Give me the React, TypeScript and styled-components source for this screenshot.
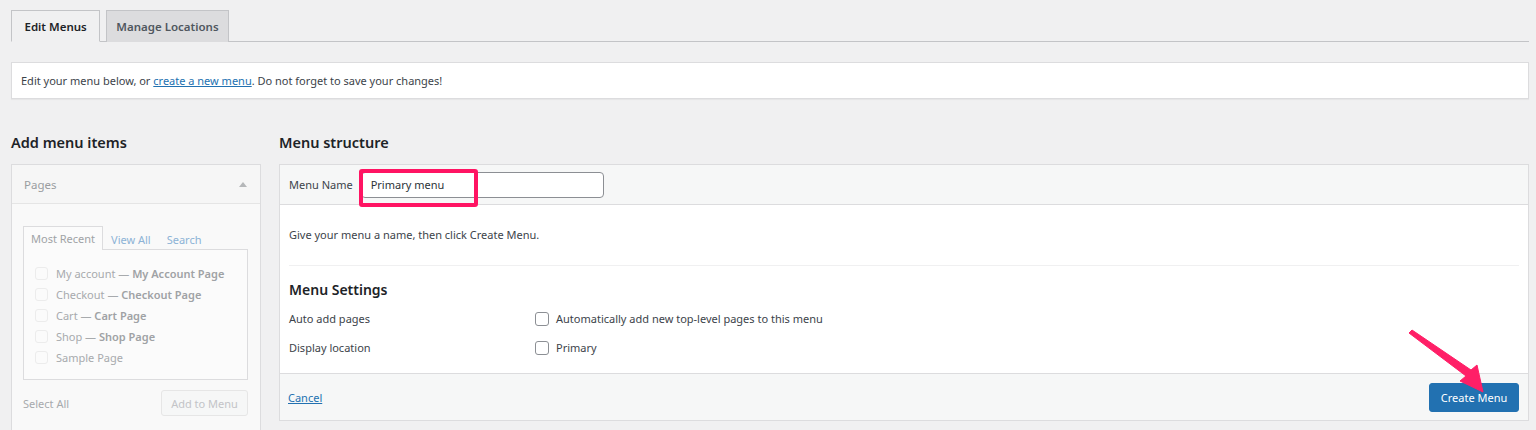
import React from "react";
import styled, { createGlobalStyle } from "styled-components";

const Global = createGlobalStyle`
  html, body { margin: 0; padding: 0; background: #f0f0f1; }
  body { font-family: "Noto Sans", "Open Sans", Arial, sans-serif; color: #3c434a; font-size: 11px; overflow: hidden; }
  * { box-sizing: border-box; }
`;

const Wrap = styled.div`
  padding: 10px 7px 0 11px;
  height: 430px;
  overflow: hidden;
`;

const TabBar = styled.div`
  display: flex;
  gap: 6px;
  border-bottom: 1px solid #c3c4c7;
  height: 32px;
`;

const Tab = styled.div<{ $active?: boolean }>`
  height: 32px;
  display: flex;
  align-items: center;
  padding: 0 ${(p) => (p.$active ? 12.5 : 9)}px;
  border: 1px solid #c3c4c7;
  border-bottom: ${(p) => (p.$active ? "1px solid #f0f0f1" : "none")};
  background: ${(p) => (p.$active ? "#f0f0f1" : "#dcdcde")};
  color: ${(p) => (p.$active ? "#1d2327" : "#50575e")};
  font-weight: 600;
  font-size: 11.5px;
  margin-bottom: -1px;
`;

const Notice = styled.div`
  margin-top: 20px;
  height: 37px;
  background: #fff;
  border: 1px solid #dcdcde;
  box-shadow: 0 1px 1px rgba(0, 0, 0, 0.04);
  display: flex;
  align-items: center;
  padding-left: 9px;
  font-size: 11px;
`;

const Link = styled.a`
  color: #2271b1;
  text-decoration: underline;
`;

const Columns = styled.div`
  display: grid;
  grid-template-columns: 250px 1fr;
  gap: 18px;
  margin-top: 32px;
`;

const Heading = styled.h2`
  margin: 0 0 11px;
  font-size: 14.5px;
  font-weight: 600;
  color: #1d2327;
  height: 22px;
  line-height: 22px;
`;

const Panel = styled.div`
  background: #fff;
  border: 1px solid #dcdcde;
`;

const LeftPanel = styled(Panel)`
  background: #f9f9f9;
  height: 300px;
`;

const PanelHead = styled.div`
  height: 39px;
  border-bottom: 1px solid #e5e5e5;
  display: flex;
  align-items: center;
  justify-content: space-between;
  padding: 0 13px 0 12px;
  color: #9a9da0;
  font-size: 11.5px;
  background: #f6f6f6;
`;

const Caret = styled.span`
  width: 0;
  height: 0;
  border-left: 4px solid transparent;
  border-right: 4px solid transparent;
  border-bottom: 5px solid #b5b7b9;
`;

const PanelBody = styled.div`
  padding: 21px 12px 0 11px;
`;

const SubTabs = styled.div`
  display: flex;
  align-items: flex-end;
  height: 24px;
`;

const SubTab = styled.div<{ $active?: boolean }>`
  height: ${(p) => (p.$active ? 24 : 22)}px;
  display: flex;
  align-items: center;
  padding: 0 ${(p) => (p.$active ? 7 : 8)}px;
  font-size: 11px;
  color: ${(p) => (p.$active ? "#a0a3a6" : "#8cb3d6")};
  border: ${(p) => (p.$active ? "1px solid #dcdcde" : "none")};
  border-bottom: none;
  background: ${(p) => (p.$active ? "#fbfbfb" : "transparent")};
  margin-bottom: -1px;
  position: relative;
  z-index: 1;
`;

const ItemBox = styled.div`
  border: 1px solid #dcdcde;
  background: #fbfbfb;
  height: 131px;
  padding: 15px 0 0 11px;
  display: flex;
  flex-direction: column;
  gap: 4px;
`;

const Item = styled.div`
  display: flex;
  align-items: center;
  gap: 8px;
  height: 17px;
  color: #a7aaad;
  font-size: 11px;
  b { font-weight: 600; color: #9fa2a5; }
`;

const FadedBox = styled.span`
  width: 13px;
  height: 13px;
  border: 1px solid #ececec;
  border-radius: 3px;
  background: #fbfbfb;
  flex: none;
`;

const LeftFoot = styled.div`
  display: flex;
  justify-content: space-between;
  align-items: center;
  margin-top: 10px;
  color: #a7aaad;
  font-size: 11px;
`;

const GhostButton = styled.div`
  width: 87px;
  height: 26px;
  border: 1px solid #e6e6e6;
  border-radius: 3px;
  background: #f6f7f7;
  color: #c3c4c7;
  display: flex;
  align-items: center;
  justify-content: center;
  font-size: 11px;
`;

const RightPanel = styled(Panel)`
  height: 257px;
  display: flex;
  flex-direction: column;
  position: relative;
`;

const NameBar = styled.div`
  height: 40px;
  background: #f6f7f7;
  border-bottom: 1px solid #dcdcde;
  display: flex;
  align-items: center;
  padding-left: 9px;
  gap: 8px;
  font-size: 11px;
  position: relative;
`;

const NameInput = styled.div`
  width: 243px;
  height: 26px;
  border: 1px solid #8c8f94;
  border-radius: 4px;
  background: #fff;
  display: flex;
  align-items: center;
  padding-left: 9px;
  color: #2c3338;
  font-size: 11px;
`;

const Highlight = styled.div`
  position: absolute;
  left: 79px;
  top: 4px;
  width: 119px;
  height: 38px;
  border: 4px solid #ff1463;
  border-radius: 3px;
  pointer-events: none;
`;

const Body = styled.div`
  flex: 1;
  padding: 0 9px;
`;

const Hint = styled.p`
  margin: 0;
  height: 61px;
  padding-top: 22px;
  font-size: 11px;
  border-bottom: 1px solid #f0f0f1;
`;

const SettingsTitle = styled.h3`
  margin: 0;
  padding-top: 14px;
  height: 38px;
  font-size: 14px;
  font-weight: 600;
  color: #1d2327;
`;

const SettingRow = styled.div`
  display: grid;
  grid-template-columns: 246px 1fr;
  align-items: center;
  height: 29px;
  font-size: 11px;
`;

const Check = styled.label`
  display: flex;
  align-items: center;
  gap: 7px;
  color: #3c434a;
`;

const CheckBox = styled.span`
  width: 14px;
  height: 14px;
  border: 1px solid #8c8f94;
  border-radius: 3px;
  background: #fff;
  flex: none;
`;

const Footer = styled.div`
  height: 47px;
  border-top: 1px solid #dcdcde;
  background: #f6f7f7;
  display: flex;
  align-items: center;
  justify-content: space-between;
  padding: 0 9px 0 8px;
  font-size: 11px;
`;

const Primary = styled.div`
  width: 90px;
  height: 29px;
  background: #2271b1;
  border: 1px solid #2271b1;
  border-radius: 3px;
  color: #fff;
  display: flex;
  align-items: center;
  justify-content: center;
  font-size: 11px;
`;

const Arrow = styled.svg`
  position: absolute;
  right: 33px;
  top: 162px;
  width: 90px;
  height: 72px;
  pointer-events: none;
  overflow: visible;
`;

export default function App() {
  return (
    <>
      <Global />
      <Wrap>
        <TabBar>
          <Tab $active>Edit Menus</Tab>
          <Tab>Manage Locations</Tab>
        </TabBar>
        <Notice>
          <span>
            Edit your menu below, or <Link>create a new menu</Link>. Do not forget to save your changes!
          </span>
        </Notice>
        <Columns>
          <div>
            <Heading>Add menu items</Heading>
            <LeftPanel>
              <PanelHead>
                <span>Pages</span>
                <Caret />
              </PanelHead>
              <PanelBody>
                <SubTabs>
                  <SubTab $active>Most Recent</SubTab>
                  <SubTab>View All</SubTab>
                  <SubTab>Search</SubTab>
                </SubTabs>
                <ItemBox>
                  <Item><FadedBox /><span>My account — <b>My Account Page</b></span></Item>
                  <Item><FadedBox /><span>Checkout — <b>Checkout Page</b></span></Item>
                  <Item><FadedBox /><span>Cart — <b>Cart Page</b></span></Item>
                  <Item><FadedBox /><span>Shop — <b>Shop Page</b></span></Item>
                  <Item><FadedBox /><span>Sample Page</span></Item>
                </ItemBox>
                <LeftFoot>
                  <span>Select All</span>
                  <GhostButton>Add to Menu</GhostButton>
                </LeftFoot>
              </PanelBody>
            </LeftPanel>
          </div>
          <div>
            <Heading>Menu structure</Heading>
            <RightPanel>
              <NameBar>
                <span>Menu Name</span>
                <NameInput>Primary menu</NameInput>
                <Highlight />
              </NameBar>
              <Body>
                <Hint>Give your menu a name, then click Create Menu.</Hint>
                <SettingsTitle>Menu Settings</SettingsTitle>
                <SettingRow>
                  <span>Auto add pages</span>
                  <Check><CheckBox />Automatically add new top-level pages to this menu</Check>
                </SettingRow>
                <SettingRow>
                  <span>Display location</span>
                  <Check><CheckBox />Primary</Check>
                </SettingRow>
              </Body>
              <Footer>
                <Link>Cancel</Link>
                <Primary>Create Menu</Primary>
              </Footer>
              <Arrow viewBox="0 0 90 72">
                <polygon
                  points="4,6 7,3 66,43 72,38 78,65 55,54 61,49"
                  fill="#ff1f67"
                  stroke="#ff1f67"
                  strokeWidth="1"
                  strokeLinejoin="round"
                />
              </Arrow>
            </RightPanel>
          </div>
        </Columns>
      </Wrap>
    </>
  );
}
